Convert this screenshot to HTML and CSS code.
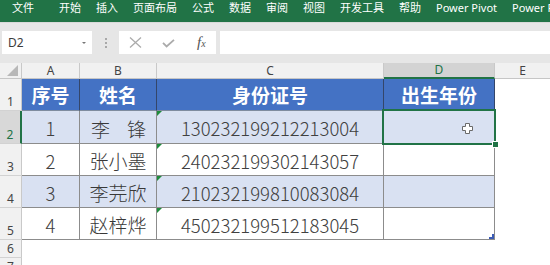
FILE: index.html
```html
<!DOCTYPE html>
<html lang="zh">
<head>
<meta charset="utf-8">
<title>Excel</title>
<link rel="stylesheet" href="styles.css">
</head>
<body>
<div class="ribbon">
  <span class="tab first">文件</span>
  <span class="tab">开始</span>
  <span class="tab">插入</span>
  <span class="tab">页面布局</span>
  <span class="tab">公式</span>
  <span class="tab">数据</span>
  <span class="tab">审阅</span>
  <span class="tab">视图</span>
  <span class="tab">开发工具</span>
  <span class="tab">帮助</span>
  <span class="tab">Power Pivot</span>
  <span class="tab">Power Pivot</span>
</div>
<div class="fbar">
  <div class="namebox"><span>D2</span><span class="arrow"></span></div>
  <div class="grip"><i></i><i></i><i></i></div>
  <div class="btns">
    <svg class="ico-x" width="13" height="11" viewBox="0 0 13 11"><path d="M1 0.5 L12 10.5 M12 0.5 L1 10.5" stroke="#ababab" stroke-width="1.3" fill="none"/></svg>
    <svg class="ico-ok" width="13" height="9" viewBox="0 0 13 9"><path d="M1 3.8 L4.6 7.4 L12 0.8" stroke="#ababab" stroke-width="1.8" fill="none"/></svg>
    <span class="fx">f<span class="fxx">x</span></span>
  </div>
  <div class="finput"></div>
</div>
<div class="sheet">
  <div class="ch corner"><span class="tri-corner"></span></div>
  <div class="ch">A</div>
  <div class="ch">B</div>
  <div class="ch">C</div>
  <div class="ch sel">D</div>
  <div class="ch last">E</div>

  <div class="rh">1</div>
  <div class="td hd">序号</div>
  <div class="td hd">姓名</div>
  <div class="td hd">身份证号</div>
  <div class="td hd">出生年份</div>
  <div class="e"></div>

  <div class="rh sel">2</div>
  <div class="td alt num">1</div>
  <div class="td alt dist"><span>李</span><span>锋</span></div>
  <div class="td alt num tri">130232199212213004</div>
  <div class="td alt cur-cell">
    <span class="selbox"></span><span class="fh"></span>
    <svg class="cursor" width="11" height="11" viewBox="0 0 11 11"><path d="M3.5 0.5h4v3h3v4h-3v3h-4v-3h-3v-4h3z" fill="#fff" stroke="#6a6a6a" stroke-width="1"/></svg>
  </div>
  <div class="e"></div>

  <div class="rh">3</div>
  <div class="td num">2</div>
  <div class="td">张小墨</div>
  <div class="td num tri">240232199302143057</div>
  <div class="td"></div>
  <div class="e"></div>

  <div class="rh">4</div>
  <div class="td alt num">3</div>
  <div class="td alt">李芫欣</div>
  <div class="td alt num tri">210232199810083084</div>
  <div class="td alt"></div>
  <div class="e"></div>

  <div class="rh">5</div>
  <div class="td num">4</div>
  <div class="td">赵梓烨</div>
  <div class="td num tri">450232199512183045</div>
  <div class="td rs"></div>
  <div class="e"></div>

  <div class="rh">6</div>
  <div class="e"></div><div class="e"></div><div class="e"></div><div class="e"></div><div class="e"></div>

  <div class="rh">7</div>
  <div class="e"></div><div class="e"></div><div class="e"></div><div class="e"></div><div class="e"></div>
</div>
</body>
</html>
```

FILE: styles.css
```css
html, body {
  margin: 0;
  padding: 0;
}
body {
  width: 550px;
  height: 265px;
  overflow: hidden;
  background: #ffffff;
  font-family: "Noto Sans", "Noto Sans CJK SC", sans-serif;
}

/* Ribbon tabs */
.ribbon {
  height: 22px;
  background: #217346;
  color: #ffffff;
  display: flex;
  gap: 15px;
  padding-left: 12px;
  font-size: 11px;
  line-height: 16px;
  white-space: nowrap;
  overflow: hidden;
}
.tab.first {
  margin-right: 10px;
}

/* Formula bar */
.fbar {
  box-sizing: border-box;
  height: 41px;
  background: #e6e6e6;
  border-top: 1px solid #d9d9d9;
  padding: 8px 0 9px 2px;
  display: flex;
  align-items: stretch;
}
.namebox {
  width: 90px;
  background: #ffffff;
  display: flex;
  align-items: center;
  box-sizing: border-box;
  padding-left: 6px;
  font-size: 12px;
  color: #3c3c3c;
}
.arrow {
  margin-left: auto;
  margin-right: 6px;
  width: 0;
  height: 0;
  border-left: 2px solid transparent;
  border-right: 2px solid transparent;
  border-top: 2px solid #777;
}
.grip {
  width: 27px;
  display: flex;
  flex-direction: column;
  align-items: center;
  justify-content: center;
  gap: 2px;
}
.grip i {
  display: block;
  width: 2px;
  height: 2px;
  background: #a8a8a8;
}
.btns {
  width: 97px;
  background: #ffffff;
  display: flex;
  align-items: center;
  padding-left: 10px;
  box-sizing: border-box;
}
.ico-ok {
  margin-left: 20px;
  margin-top: 2px;
}
.fx {
  margin-left: 22px;
  font-family: "Liberation Serif", serif;
  font-style: italic;
  font-size: 15px;
  color: #555;
  line-height: 1;
}
.fxx {
  font-size: 10px;
}
.finput {
  flex: 1;
  margin-left: 4px;
  background: #ffffff;
}

/* Sheet grid */
.sheet {
  display: grid;
  grid-template-columns: 22px 58px 77px 227px 111px 1fr;
  grid-template-rows: 16px 32px 33px 32px 32px 32px 18px 18px;
}
.ch {
  box-sizing: border-box;
  background: #f1f1f1;
  border-right: 1px solid #c9c9c9;
  border-bottom: 1px solid #c6c6c6;
  display: flex;
  align-items: center;
  justify-content: center;
  font-size: 12px;
  color: #444;
  line-height: 1;
}
.ch.last {
  border-right: none;
}
.ch.sel {
  background: #d3d3d3;
  color: #217346;
  border-bottom: 2px solid #217346;
}
.corner {
  position: relative;
}
.tri-corner {
  position: absolute;
  right: 3px;
  bottom: 2px;
  width: 0;
  height: 0;
  border-left: 11px solid transparent;
  border-bottom: 11px solid #b8b8b8;
}
.rh {
  box-sizing: border-box;
  background: #f1f1f1;
  border-right: 1px solid #c9c9c9;
  border-bottom: 1px solid #d2d2d2;
  display: flex;
  align-items: flex-end;
  justify-content: center;
  font-size: 12px;
  line-height: 14px;
  padding-bottom: 1px;
  color: #444;
}
.rh.sel {
  background: #d8d8d8;
  border-right: 2px solid #217346;
  color: #217346;
}
.td {
  box-sizing: border-box;
  border-right: 1px solid #8c8c8c;
  border-bottom: 1px solid #8c8c8c;
  display: flex;
  align-items: center;
  justify-content: center;
  padding-top: 2px;
  font-family: "Noto Sans CJK SC", sans-serif;
  font-weight: 300;
  font-size: 19px;
  color: #383838;
  position: relative;
  white-space: nowrap;
}
.td.hd {
  background: #4472c4;
  color: #ffffff;
  font-weight: bold;
  padding-top: 0;
  border-right-color: #34466a;
  border-bottom-color: #7f8c9f;
}
.td.alt {
  background: #d9e1f2;
}
.td.num {
  font-size: 18.5px;
  color: #404040;
}
.td.dist {
  justify-content: space-between;
  padding-left: 11px;
  padding-right: 10px;
}
.tri::before {
  content: "";
  position: absolute;
  left: 0;
  top: 0;
  width: 0;
  height: 0;
  border-top: 5px solid #1e8c3c;
  border-right: 5px solid transparent;
}
.rs::after {
  content: "";
  position: absolute;
  right: 0;
  bottom: 0;
  width: 3px;
  height: 3px;
  border-right: 2px solid #3b5bb5;
  border-bottom: 2px solid #3b5bb5;
}
.cur-cell {
  z-index: 2;
}
.selbox {
  position: absolute;
  left: -2px;
  top: -2px;
  right: -2px;
  bottom: -2px;
  border: 2px solid #217346;
  pointer-events: none;
}
.fh {
  position: absolute;
  right: -5px;
  bottom: -5px;
  width: 5px;
  height: 5px;
  background: #217346;
  border: 1px solid #ffffff;
}
.cursor {
  position: absolute;
  left: 78px;
  top: 12px;
}
.e {
  background: #ffffff;
}
```
